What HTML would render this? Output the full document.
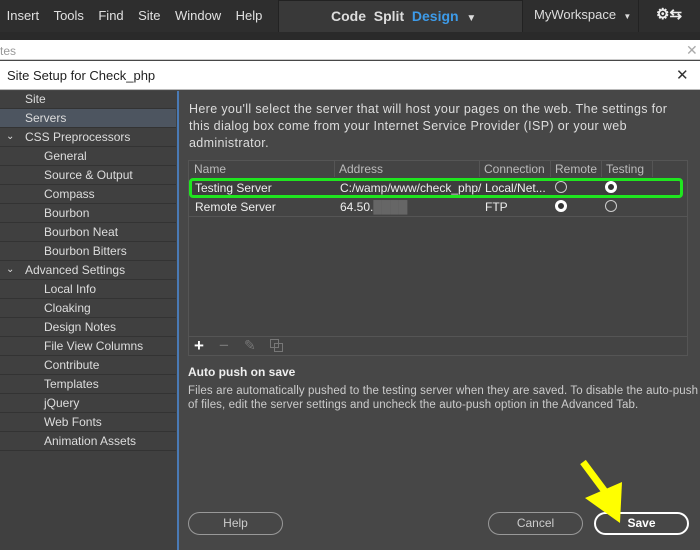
<!DOCTYPE html>
<html><head><style>
*{margin:0;padding:0;box-sizing:border-box}
body{width:700px;height:550px;overflow:hidden;background:#474747;font-family:"Liberation Sans",sans-serif;position:relative;font-size:12px;color:#ddd}
.a{position:absolute;white-space:nowrap}
.row{position:absolute;left:0;width:176px;height:19px;border-bottom:1px solid #333;line-height:18px;color:#ddd;font-size:12px}
</style></head><body>
<div class="a" style="left:0;top:0;width:700px;height:32px;background:#2e2e2e"></div>
<div class="a" style="left:3px;top:8px;font-size:13px;color:#e0e0e0;word-spacing:0">&nbsp;Insert&nbsp;&nbsp;&nbsp;&nbsp;Tools&nbsp;&nbsp;&nbsp;&nbsp;Find&nbsp;&nbsp;&nbsp;&nbsp;Site&nbsp;&nbsp;&nbsp;&nbsp;Window&nbsp;&nbsp;&nbsp;&nbsp;Help</div>
<div class="a" style="left:278px;top:0;width:245px;height:34px;background:#393939;border:1px solid #222"></div>
<div class="a" style="left:331px;top:8px;font-size:14px;font-weight:bold;color:#ddd">Code&nbsp;&nbsp;Split&nbsp;&nbsp;<span style="color:#3d9be9">Design</span>&nbsp;&nbsp;<span style="font-size:10px">▼</span></div>
<div class="a" style="left:534px;top:7px;font-size:13px;color:#ddd">MyWorkspace&nbsp;&nbsp;<span style="font-size:8px">▼</span></div>
<div class="a" style="left:638px;top:0;width:1px;height:32px;background:#222"></div>
<div class="a" style="left:656px;top:5px;font-size:15px;font-weight:bold;color:#eee">⚙⇆</div>
<div class="a" style="left:0;top:32px;width:700px;height:10px;background:#2a2a2a"></div>
<div class="a" style="left:0;top:40px;width:700px;height:20px;background:#fff;border-bottom:1px solid #ccc"></div>
<div class="a" style="left:0;top:44px;font-size:12px;color:#999">tes</div>
<div class="a" style="left:686px;top:42px;font-size:14px;color:#aaa">✕</div>
<div class="a" style="left:0;top:61px;width:700px;height:29px;background:#fff;border-bottom:1px solid #bbb"></div>
<div class="a" style="left:7px;top:68px;font-size:13px;color:#222">Site Setup for Check_php</div>
<div class="a" style="left:676px;top:66px;font-size:15px;color:#333">✕</div>
<div class="a" style="left:0;top:91px;width:177px;height:459px;background:#404040"></div>
<div class="a" style="left:177px;top:91px;width:2px;height:459px;background:#4a7ab5"></div>
<div class="row" style="top:90px;padding-left:25px">Site</div>
<div class="row" style="top:109px;padding-left:25px;background:#4d5560">Servers</div>
<div class="row" style="top:128px;padding-left:25px"><span class="a" style="left:6px;font-size:10px">⌄</span>CSS Preprocessors</div>
<div class="row" style="top:147px;padding-left:44px">General</div>
<div class="row" style="top:166px;padding-left:44px">Source &amp; Output</div>
<div class="row" style="top:185px;padding-left:44px">Compass</div>
<div class="row" style="top:204px;padding-left:44px">Bourbon</div>
<div class="row" style="top:223px;padding-left:44px">Bourbon Neat</div>
<div class="row" style="top:242px;padding-left:44px">Bourbon Bitters</div>
<div class="row" style="top:261px;padding-left:25px"><span class="a" style="left:6px;font-size:10px">⌄</span>Advanced Settings</div>
<div class="row" style="top:280px;padding-left:44px">Local Info</div>
<div class="row" style="top:299px;padding-left:44px">Cloaking</div>
<div class="row" style="top:318px;padding-left:44px">Design Notes</div>
<div class="row" style="top:337px;padding-left:44px">File View Columns</div>
<div class="row" style="top:356px;padding-left:44px">Contribute</div>
<div class="row" style="top:375px;padding-left:44px">Templates</div>
<div class="row" style="top:394px;padding-left:44px">jQuery</div>
<div class="row" style="top:413px;padding-left:44px">Web Fonts</div>
<div class="row" style="top:432px;padding-left:44px">Animation Assets</div>
<div class="a" style="left:189px;top:101px;font-size:12.5px;line-height:17px;color:#ddd;letter-spacing:0.35px">Here you'll select the server that will host your pages on the web. The settings for<br>this dialog box come from your Internet Service Provider (ISP) or your web<br>administrator.</div>
<div class="a" style="left:188px;top:160px;width:500px;height:196px;border:1px solid #555;background:#444"></div>
<div class="a" style="left:189px;top:336px;width:498px;height:1px;background:#555"></div>
<div class="a" style="left:189px;top:216px;width:498px;height:1px;background:#555"></div>
<div class="a" style="left:334px;top:161px;width:1px;height:16px;background:#555"></div>
<div class="a" style="left:479px;top:161px;width:1px;height:16px;background:#555"></div>
<div class="a" style="left:550px;top:161px;width:1px;height:16px;background:#555"></div>
<div class="a" style="left:601px;top:161px;width:1px;height:16px;background:#555"></div>
<div class="a" style="left:652px;top:161px;width:1px;height:16px;background:#555"></div>
<div class="a" style="left:194px;top:162px;color:#bbb">Name</div>
<div class="a" style="left:339px;top:162px;color:#bbb">Address</div>
<div class="a" style="left:484px;top:162px;color:#bbb">Connection</div>
<div class="a" style="left:555px;top:162px;color:#bbb">Remote</div>
<div class="a" style="left:606px;top:162px;color:#bbb">Testing</div>
<div class="a" style="left:189px;top:178px;width:494px;height:20px;border:3px solid #1fe51f;border-radius:4px;background:#3d3d3d"></div>
<div class="a" style="left:195px;top:181px;color:#eee">Testing Server</div>
<div class="a" style="left:340px;top:181px;color:#eee">C:/wamp/www/check_php/</div>
<div class="a" style="left:485px;top:181px;color:#eee">Local/Net...</div>
<div class="a" style="left:555px;top:181px;width:12px;height:12px;border:1px solid #ccc;border-radius:50%"></div>
<div class="a" style="left:605px;top:181px;width:12px;height:12px;border:3px solid #fff;border-radius:50%;background:#333"></div>
<div class="a" style="left:195px;top:200px;color:#eee">Remote Server</div>
<div class="a" style="left:340px;top:200px;color:#eee">64.50.<span style="color:#666">&#9608;&#9608;&#9608;&#9608;</span></div>
<div class="a" style="left:485px;top:200px;color:#eee">FTP</div>
<div class="a" style="left:555px;top:200px;width:12px;height:12px;border:3px solid #fff;border-radius:50%;background:#333"></div>
<div class="a" style="left:605px;top:200px;width:12px;height:12px;border:1px solid #ccc;border-radius:50%"></div>
<div class="a" style="left:194px;top:336px;font-size:17px;font-weight:bold;color:#fff">+</div>
<div class="a" style="left:219px;top:336px;font-size:17px;color:#777">−</div>
<div class="a" style="left:244px;top:337px;font-size:14px;color:#777">✎</div>
<div class="a" style="left:270px;top:339px;width:9px;height:9px;border:1px solid #777"></div>
<div class="a" style="left:274px;top:343px;width:9px;height:9px;border:1px solid #777"></div>
<div class="a" style="left:188px;top:365px;font-weight:bold;color:#eee">Auto push on save</div>
<div class="a" style="left:188px;top:384px;font-size:11.5px;line-height:14px;color:#ccc;letter-spacing:0.1px">Files are automatically pushed to the testing server when they are saved. To disable the auto-push<br>of files, edit the server settings and uncheck the auto-push option in the Advanced Tab.</div>
<div class="a" style="left:188px;top:512px;width:95px;height:23px;border:1px solid #999;border-radius:12px;text-align:center;line-height:21px;color:#ccc">Help</div>
<div class="a" style="left:488px;top:512px;width:95px;height:23px;border:1px solid #999;border-radius:12px;text-align:center;line-height:21px;color:#ccc">Cancel</div>
<div class="a" style="left:594px;top:512px;width:95px;height:23px;border:2px solid #fff;border-radius:12px;text-align:center;line-height:19px;color:#fff;font-weight:bold">Save</div>
<svg class="a" style="left:570px;top:455px" width="70" height="80"><path d="M13 7 L42 46" stroke="#ff0" stroke-width="7"/><path d="M15 43 L52 27 L50 68 Z" fill="#ff0"/></svg>
</body></html>
